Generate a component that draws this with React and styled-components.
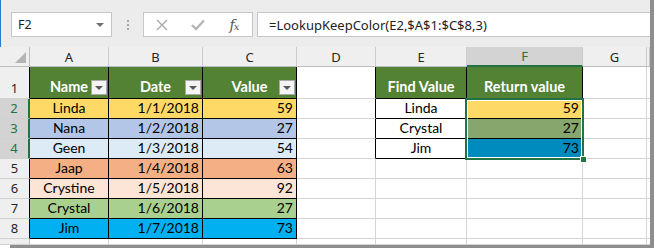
import styled, { createGlobalStyle, css } from "styled-components";

const GlobalStyle = createGlobalStyle`
    html, body {
        margin: 0;
        padding: 0;
        background: #fff;
        overflow: hidden;
    }
`

const GREEN = '#217346';
const GRID = '#d4d4d4';
const HEAD_BG = '#efefef';
const SEL_BG = '#d3d3d3';

const UI_FONT = `"Noto Sans", "Open Sans", sans-serif`;
const CELL_FONT = `Lato, "Liberation Sans", sans-serif`;

const Frame = styled.div`
    display: flex;
    flex-direction: row;
    width: 654px;
    height: 248px;
    overflow: hidden;
`

const Main = styled.div`
    display: flex;
    flex-direction: column;
    width: 650px;
`

const RightBar = styled.div`
    width: 4px;
    background: #8e8e8e;
`

const BottomBar = styled.div`
    height: 3px;
    margin-left: 10px;
    background: #8e8e8e;
`

// formula bar
const Toolbar = styled.div`
    display: flex;
    flex-direction: row;
    align-items: stretch;
    height: 25px;
    padding: 12px 0 10px 10px;
    background: #ececec;
    border-left: 2px solid #2b79d0;
    margin-left: -1px;
    font-family: ${UI_FONT};
`

const NameBox = styled.div`
    display: flex;
    align-items: center;
    justify-content: space-between;
    width: 101px;
    box-sizing: border-box;
    padding: 0 7px 0 6px;
    background: #fff;
    border: 1px solid #c6c6c6;
    font-size: 12.5px;
    color: #222;
`

const Caret = styled.span`
    width: 0;
    height: 0;
    border-left: 4px solid transparent;
    border-right: 4px solid transparent;
    border-top: 4px solid #707070;
`

const Dots = styled.div`
    display: flex;
    flex-direction: column;
    align-items: center;
    justify-content: center;
    gap: 2px;
    width: 31px;

    & > span {
        width: 2px;
        height: 2px;
        background: #a8a8a8;
    }
`

const FxBox = styled.div`
    display: flex;
    flex-direction: row;
    width: 110px;
    box-sizing: border-box;
    background: #fff;
    border: 1px solid #c6c6c6;
`

const FxBtn = styled.div`
    width: 36px;
    display: flex;
    align-items: center;
    justify-content: center;
`

const FxText = styled.span`
    font-family: "DejaVu Serif", "Liberation Serif", serif;
    font-style: italic;
    font-size: 14px;
    color: #555;
    letter-spacing: -1px;

    & > small {
        font-size: 10px;
    }
`

const Formula = styled.div`
    flex-grow: 1;
    margin-left: 4px;
    display: flex;
    align-items: center;
    padding-left: 11px;
    background: #fff;
    border: 1px solid #c6c6c6;
    border-right: none;
    font-size: 13px;
    color: #222;
    white-space: nowrap;
`

// sheet
const Sheet = styled.div`
    display: grid;
    grid-template-columns: 30px 79px 94px 94px 79px 91px 116px 64px 3px;
    grid-template-rows: 20px 32px repeat(7, 20px) 6px;
    height: 198px;
    overflow: hidden;
`

const placed = css`
    grid-row: ${p => p.$r + 1};
    grid-column: ${p => p.$c + 1};
`

const Corner = styled.div`
    grid-row: 1;
    grid-column: 1;
    position: relative;
    background: ${HEAD_BG};
    border-right: 1px solid #bdbdbd;
    border-bottom: 1px solid #bdbdbd;
    box-sizing: border-box;

    &::after {
        content: '';
        position: absolute;
        right: 3px;
        bottom: 3px;
        width: 0;
        height: 0;
        border-left: 11px solid transparent;
        border-bottom: 11px solid #b4b4b4;
    }
`

const ColHead = styled.div`
    ${placed}
    display: flex;
    align-items: center;
    justify-content: center;
    box-sizing: border-box;
    background: ${p => p.$sel ? SEL_BG : HEAD_BG};
    border-right: 1px solid #cacaca;
    border-bottom: ${p => p.$sel ? `2px solid ${GREEN}` : '1px solid #bdbdbd'};
    font-family: ${UI_FONT};
    font-size: 13px;
    color: ${p => p.$sel ? GREEN : '#262626'};
`

const RowHead = styled.div`
    ${placed}
    display: flex;
    align-items: flex-end;
    justify-content: center;
    padding-bottom: 1px;
    box-sizing: border-box;
    background: ${p => p.$sel ? SEL_BG : HEAD_BG};
    border-right: ${p => p.$sel ? `2px solid ${GREEN}` : `1px solid ${p.$rb}`};
    border-bottom: 1px solid #d0d0d0;
    font-family: ${UI_FONT};
    font-size: 13px;
    line-height: 18px;
    color: ${p => p.$sel ? GREEN : '#262626'};
`

const Cell = styled.div`
    ${placed}
    position: relative;
    display: flex;
    align-items: flex-end;
    justify-content: ${p => p.$align};
    box-sizing: border-box;
    padding: 0 3px 1px 3px;
    background: ${p => p.$bg || '#fff'};
    border-right: 1px solid ${p => p.$rb};
    border-bottom: 1px solid ${p => p.$bb};
    font-family: ${CELL_FONT};
    font-size: 14px;
    line-height: 18px;
    color: #000;
    white-space: nowrap;

    ${p => p.$head && css`
        justify-content: center;
        padding-bottom: 2px;
        font-weight: 700;
        font-size: 14.5px;
        color: #fff;
    `}
`

const FilterBtn = styled.span`
    position: absolute;
    right: 1px;
    bottom: 3px;
    width: 16px;
    height: 15px;
    box-sizing: border-box;
    display: flex;
    align-items: center;
    justify-content: center;
    background: #f4f4f4;
    border: 1px solid #a9a9a9;

    &::after {
        content: '';
        width: 0;
        height: 0;
        border-left: 4px solid transparent;
        border-right: 4px solid transparent;
        border-top: 4px solid #595959;
    }
`

const Selection = styled.div`
    grid-column: 7;
    grid-row: 3 / 6;
    position: relative;
    margin: -1px -1px -1px -2px;
    border: 2px solid ${GREEN};
    box-shadow: inset 0 0 0 1px #fff;
    pointer-events: none;
`

const FillHandle = styled.span`
    position: absolute;
    right: -5px;
    bottom: -5px;
    width: 5px;
    height: 5px;
    background: ${GREEN};
    border: 1px solid #fff;
`

const ArrowLayer = styled.div`
    grid-column: 5;
    grid-row: 4 / 6;
    pointer-events: none;
`

const colLetters = ['A', 'B', 'C', 'D', 'E', 'F', 'G', ''];

const sourceRows = [
    ['Linda', '1/1/2018', 59, '#ffd966'],
    ['Nana', '1/2/2018', 27, '#b4c6e7'],
    ['Geen', '1/3/2018', 54, '#ddebf7'],
    ['Jaap', '1/4/2018', 63, '#f4b084'],
    ['Crystine', '1/5/2018', 92, '#fce4d6'],
    ['Crystal', '1/6/2018', 27, '#a9d08e'],
    ['Jim', '1/7/2018', 73, '#00b0f0'],
];

const lookupRows = [
    ['Linda', 59, '#ffd966'],
    ['Crystal', 27, '#87a66d'],
    ['Jim', 73, '#008bbf'],
];

const HEADER_BG = '#548235';

// is cell (r,c) inside one of the two bordered tables
const inTable = (r, c) =>
    (c >= 1 && c <= 3 && r >= 1 && r <= 8) || (c >= 5 && c <= 6 && r >= 1 && r <= 4);

const cellContent = (r, c) => {
    if (r === 1) {
        if (c === 1) return { text: 'Name', head: true, filter: true };
        if (c === 2) return { text: 'Date', head: true, filter: true };
        if (c === 3) return { text: 'Value', head: true, filter: true };
        if (c === 5) return { text: 'Find Value', head: true };
        if (c === 6) return { text: 'Return value', head: true };
    }
    if (r >= 2 && r <= 8 && c >= 1 && c <= 3) {
        const row = sourceRows[r - 2];
        const align = c === 1 ? 'center' : 'flex-end';
        return { text: row[c - 1], bg: row[3], align };
    }
    if (r >= 2 && r <= 4 && c >= 5 && c <= 6) {
        const row = lookupRows[r - 2];
        if (c === 5) return { text: row[0], align: 'center' };
        return { text: row[1], bg: row[2], align: 'flex-end' };
    }
    return {};
};

const Arrow = () => (
    <svg width="79" height="40" viewBox="0 0 79 40">
        <polygon points="4,15.8 52,13 52,6.5 75,17 52,28 52,20.5 4,18.2" fill="#ff2eff" />
    </svg>
);

const App = () => {
    const cells = [];

    cells.push(<Corner key="corner" />);
    colLetters.forEach((l, i) => {
        cells.push(<ColHead key={`h${i}`} $r={0} $c={i + 1} $sel={l === 'F'}>{l}</ColHead>);
    });

    for (let r = 1; r <= 9; r++) {
        const sel = r >= 2 && r <= 4;
        cells.push(
            <RowHead key={`r${r}`} $r={r} $c={0} $sel={sel} $rb={inTable(r, 1) ? '#000' : '#bdbdbd'}>
                {r <= 8 ? r : ''}
            </RowHead>
        );
        for (let c = 1; c <= 8; c++) {
            const info = cellContent(r, c);
            const rb = inTable(r, c) || inTable(r, c + 1) ? '#000' : GRID;
            const bb = inTable(r, c) || inTable(r + 1, c) ? '#000' : GRID;
            cells.push(
                <Cell
                    key={`c${r}-${c}`}
                    $r={r}
                    $c={c}
                    $head={info.head}
                    $bg={info.head ? HEADER_BG : info.bg}
                    $align={info.align || 'flex-start'}
                    $rb={rb}
                    $bb={bb}
                >
                    {info.text}
                    {info.filter && <FilterBtn />}
                </Cell>
            );
        }
    }

    return (
        <Frame>
            <GlobalStyle />
            <Main>
                <Toolbar>
                    <NameBox>F2<Caret /></NameBox>
                    <Dots><span /><span /><span /></Dots>
                    <FxBox>
                        <FxBtn>
                            <svg width="12" height="12" viewBox="0 0 12 12">
                                <path d="M1 1 L11 11 M11 1 L1 11" stroke="#a9a9a9" strokeWidth="1.4" fill="none" />
                            </svg>
                        </FxBtn>
                        <FxBtn>
                            <svg width="14" height="12" viewBox="0 0 14 12">
                                <path d="M1 6 L5 10 L13 1.5" stroke="#b5b5b5" strokeWidth="2.4" fill="none" />
                            </svg>
                        </FxBtn>
                        <FxBtn><FxText>f<small>x</small></FxText></FxBtn>
                    </FxBox>
                    <Formula>=LookupKeepColor(E2,$A$1:$C$8,3)</Formula>
                </Toolbar>
                <Sheet>
                    {cells}
                    <ArrowLayer><Arrow /></ArrowLayer>
                    <Selection><FillHandle /></Selection>
                </Sheet>
                <BottomBar />
            </Main>
            <RightBar />
        </Frame>
    );
}

export default App;
